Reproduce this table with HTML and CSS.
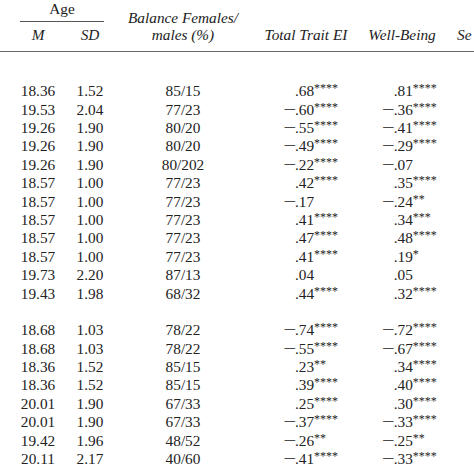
FILE: index.html
```html
<!DOCTYPE html>
<html>
<head>
<meta charset="utf-8">
<link rel="stylesheet" href="styles.css">
</head>
<body>
<div class="table">
  <div class="head">
    <div class="age"><span>Age</span></div>
    <div class="h c1">M</div>
    <div class="h c2">SD</div>
    <div class="h bal">Balance Females/<br>males (%)</div>
    <div class="h c4">Total Trait EI</div>
    <div class="h c5">Well-Being</div>
    <div class="h c6">Se</div>
  </div>
  <div class="body">
    <div class="row"><span>18.36</span><span>1.52</span><span>85/15</span><span class="v4"><i></i>.68<sup>****</sup></span><span class="v5"><i></i>.81<sup>****</sup></span></div>
    <div class="row"><span>19.53</span><span>2.04</span><span>77/23</span><span class="v4"><i>−</i>.60<sup>****</sup></span><span class="v5"><i>−</i>.36<sup>****</sup></span></div>
    <div class="row"><span>19.26</span><span>1.90</span><span>80/20</span><span class="v4"><i>−</i>.55<sup>****</sup></span><span class="v5"><i>−</i>.41<sup>****</sup></span></div>
    <div class="row"><span>19.26</span><span>1.90</span><span>80/20</span><span class="v4"><i>−</i>.49<sup>****</sup></span><span class="v5"><i>−</i>.29<sup>****</sup></span></div>
    <div class="row"><span>19.26</span><span>1.90</span><span>80/202</span><span class="v4"><i>−</i>.22<sup>****</sup></span><span class="v5"><i>−</i>.07</span></div>
    <div class="row"><span>18.57</span><span>1.00</span><span>77/23</span><span class="v4"><i></i>.42<sup>****</sup></span><span class="v5"><i></i>.35<sup>****</sup></span></div>
    <div class="row"><span>18.57</span><span>1.00</span><span>77/23</span><span class="v4"><i>−</i>.17</span><span class="v5"><i>−</i>.24<sup>**</sup></span></div>
    <div class="row"><span>18.57</span><span>1.00</span><span>77/23</span><span class="v4"><i></i>.41<sup>****</sup></span><span class="v5"><i></i>.34<sup>***</sup></span></div>
    <div class="row"><span>18.57</span><span>1.00</span><span>77/23</span><span class="v4"><i></i>.47<sup>****</sup></span><span class="v5"><i></i>.48<sup>****</sup></span></div>
    <div class="row"><span>18.57</span><span>1.00</span><span>77/23</span><span class="v4"><i></i>.41<sup>****</sup></span><span class="v5"><i></i>.19<sup>*</sup></span></div>
    <div class="row"><span>19.73</span><span>2.20</span><span>87/13</span><span class="v4"><i></i>.04</span><span class="v5"><i></i>.05</span></div>
    <div class="row"><span>19.43</span><span>1.98</span><span>68/32</span><span class="v4"><i></i>.44<sup>****</sup></span><span class="v5"><i></i>.32<sup>****</sup></span></div>
    <div class="row blank"></div>
    <div class="row"><span>18.68</span><span>1.03</span><span>78/22</span><span class="v4"><i>−</i>.74<sup>****</sup></span><span class="v5"><i>−</i>.72<sup>****</sup></span></div>
    <div class="row"><span>18.68</span><span>1.03</span><span>78/22</span><span class="v4"><i>−</i>.55<sup>****</sup></span><span class="v5"><i>−</i>.67<sup>****</sup></span></div>
    <div class="row"><span>18.36</span><span>1.52</span><span>85/15</span><span class="v4"><i></i>.23<sup>**</sup></span><span class="v5"><i></i>.34<sup>****</sup></span></div>
    <div class="row"><span>18.36</span><span>1.52</span><span>85/15</span><span class="v4"><i></i>.39<sup>****</sup></span><span class="v5"><i></i>.40<sup>****</sup></span></div>
    <div class="row"><span>20.01</span><span>1.90</span><span>67/33</span><span class="v4"><i></i>.25<sup>****</sup></span><span class="v5"><i></i>.30<sup>****</sup></span></div>
    <div class="row"><span>20.01</span><span>1.90</span><span>67/33</span><span class="v4"><i>−</i>.37<sup>****</sup></span><span class="v5"><i>−</i>.33<sup>****</sup></span></div>
    <div class="row"><span>19.42</span><span>1.96</span><span>48/52</span><span class="v4"><i>−</i>.26<sup>**</sup></span><span class="v5"><i>−</i>.25<sup>**</sup></span></div>
    <div class="row"><span>20.11</span><span>2.17</span><span>40/60</span><span class="v4"><i>−</i>.41<sup>****</sup></span><span class="v5"><i>−</i>.33<sup>****</sup></span></div>
  </div>
</div>
</body>
</html>
```

FILE: styles.css
```css
html, body {
  margin: 0;
  padding: 0;
  background: #ffffff;
  overflow: hidden;
}
body {
  width: 474px;
  height: 474px;
  font-family: "Liberation Serif", "Times New Roman", serif;
  font-size: 15.3px;
  color: #222222;
}
.table {
  width: 520px;
}
.head {
  display: grid;
  grid-template-columns: 76px 28px 158px 88px 104px 66px;
  grid-template-rows: 22px auto;
  border-bottom: 1.5px solid #6a6a6a;
  padding-bottom: 7px;
}
.age {
  grid-column: 1 / 3;
  grid-row: 1;
  padding-left: 20px;
  width: 84px;
  line-height: 18px;
}
.age span {
  display: block;
  text-align: center;
  border-bottom: 1.3px solid #555;
  padding-bottom: 3px;
}
.h {
  grid-row: 2;
  font-style: italic;
  line-height: 18.4px;
  text-align: center;
  padding-top: 4px;
}
.c1 { grid-column: 1; }
.c2 { grid-column: 2; }
.c4 { grid-column: 4; }
.c5 { grid-column: 5; }
.c6 { grid-column: 6; text-align: left; padding-left: 3px; }
.bal {
  grid-column: 3;
  grid-row: 1 / 3;
  align-self: end;
  line-height: 16.5px;
  padding-top: 0;
  padding-bottom: 1px;
}
.body {
  padding-top: 29.8px;
}
.row {
  display: grid;
  grid-template-columns: 76px 28px 158px 88px 104px;
  height: 18.4px;
  line-height: 18.4px;
  white-space: nowrap;
}
.row > span {
  text-align: center;
}
.row > .v4 {
  text-align: left;
  padding-left: 21.7px;
}
.row > .v5 {
  text-align: left;
  padding-left: 31px;
}
.row i {
  display: inline-block;
  font-style: normal;
  text-align: right;
  transform: scaleX(1.5);
  transform-origin: 85% 50%;
}
.v4 i { width: 11.3px; }
.v5 i { width: 12.7px; }
.row sup {
  font-size: 12px;
  vertical-align: 4px;
  line-height: 0;
}
```
